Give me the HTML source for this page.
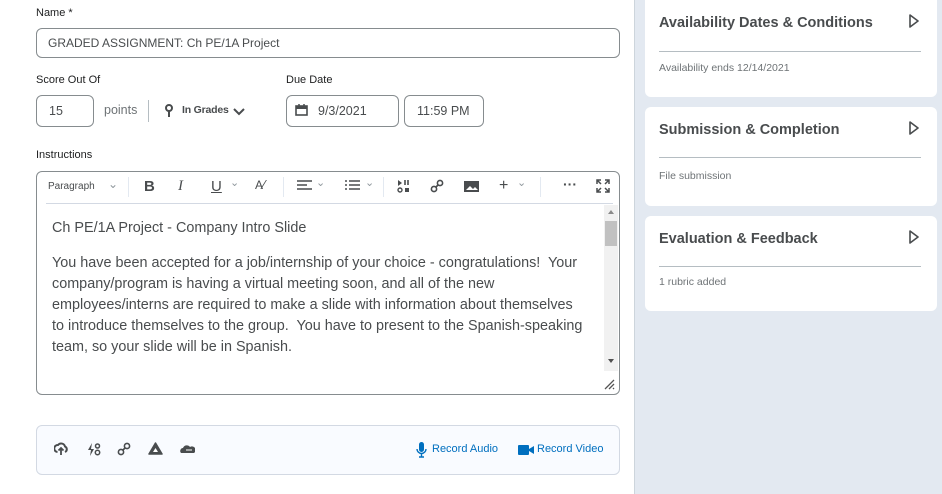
<!DOCTYPE html>
<html><head><style>
*{box-sizing:border-box;margin:0;padding:0}
body{width:942px;height:494px;overflow:hidden;background:#fff;font-family:"Liberation Sans",sans-serif;color:#202122;position:relative}
.lbl{position:absolute;font-size:11px;color:#202122}
.inp{position:absolute;border:1px solid #868c8f;border-radius:6px;font-size:12.5px;color:#494c4e;background:#fff}
.side{position:absolute;left:634px;top:0;width:308px;height:494px;background:#e3e9f1;border-left:1px solid #cdd5dc}
.card{position:absolute;left:10px;width:292px;background:#fff;border-radius:6px}
.card h3{position:absolute;left:14px;top:15px;font-size:14.5px;font-weight:bold;color:#494c4e}
.card .tri{position:absolute;right:18px;top:14px}
.card .ln{position:absolute;left:14px;right:16px;top:51px;border-top:1px solid #b5bdc2}
.card .sub{position:absolute;left:14px;top:63px;font-size:10.5px;color:#6e7376}
.tb{position:absolute;font-size:14px;color:#494c4e}
.p{position:absolute;left:52px;font-size:14.4px;color:#494c4e;line-height:21px}
.blue{color:#006fbf;font-size:11px;position:absolute}
</style></head><body>
<div class="lbl" style="left:36px;top:7px">Name *</div>
<div class="inp" style="left:36px;top:28px;width:584px;height:30px;padding:7px 11px;font-size:12px">GRADED ASSIGNMENT: Ch PE/1A Project</div>
<div class="lbl" style="left:36px;top:74px">Score Out Of</div>
<div class="lbl" style="left:286px;top:74px">Due Date</div>
<div class="inp" style="left:36px;top:95px;width:58px;height:32px;padding:8px 12px">15</div>
<div style="position:absolute;left:104px;top:103px;font-size:12.5px;color:#6e7376">points</div>
<div style="position:absolute;left:148px;top:100px;height:22px;border-left:1px solid #b5bdc2"></div>
<svg style="position:absolute;left:164px;top:104px" width="10" height="14"><circle cx="5" cy="4" r="3" fill="none" stroke="#494c4e" stroke-width="2"/><line x1="5" y1="7" x2="5" y2="13" stroke="#494c4e" stroke-width="2"/></svg>
<div style="position:absolute;left:182px;top:104px;font-size:10.5px;font-weight:bold;color:#494c4e;letter-spacing:-0.2px">In Grades</div>
<svg style="position:absolute;left:233px;top:107px" width="12" height="9"><path d="M1 2l5 5 5-5" fill="none" stroke="#494c4e" stroke-width="2"/></svg>
<div class="inp" style="left:286px;top:95px;width:113px;height:32px;padding:8px 0 0 31px">9/3/2021</div>
<svg style="position:absolute;left:295px;top:104px" width="13" height="12"><rect x="1" y="2" width="11" height="9" fill="none" stroke="#494c4e" stroke-width="1.6"/><rect x="1" y="2" width="11" height="3" fill="#494c4e"/><line x1="4" y1="0" x2="4" y2="3" stroke="#494c4e" stroke-width="1.5"/><line x1="9" y1="0" x2="9" y2="3" stroke="#494c4e" stroke-width="1.5"/></svg>
<div class="inp" style="left:404px;top:95px;width:80px;height:32px;padding:8px 0 0 12px">11:59 PM</div>
<div class="lbl" style="left:36px;top:149px">Instructions</div>
<div style="position:absolute;left:36px;top:171px;width:584px;height:224px;border:1px solid #868c8f;border-radius:6px"></div>
<div style="position:absolute;left:46px;top:203px;width:567px;border-top:1px solid #d3d9e3"></div>
<div class="tb" style="left:48px;top:181px;font-size:10px">Paragraph</div>
<div class="tb" style="left:108px;top:177px;font-size:12px;color:#90989d">⌄</div>
<div style="position:absolute;left:128px;top:177px;height:20px;border-left:1px solid #e3e9f1"></div>
<div class="tb" style="left:144px;top:178px;font-weight:bold;font-size:15px">B</div>
<div class="tb" style="left:178px;top:178px;font-style:italic;font-family:'Liberation Serif';font-size:15px">I</div>
<div class="tb" style="left:211px;top:178px;text-decoration:underline;font-size:15px">U</div>
<div class="tb" style="left:230px;top:176px;font-size:11px;color:#90989d">⌄</div>
<div class="tb" style="left:255px;top:177px;font-size:12px">A<span style="font-size:13px">⁄</span></div>
<div style="position:absolute;left:283px;top:177px;height:20px;border-left:1px solid #e3e9f1"></div>
<svg style="position:absolute;left:297px;top:180px" width="16" height="12"><path d="M0 1h15M0 5h10M0 9h15" stroke="#494c4e" stroke-width="1.6"/></svg>
<div class="tb" style="left:316px;top:176px;font-size:11px;color:#90989d">⌄</div>
<svg style="position:absolute;left:345px;top:180px" width="16" height="12"><path d="M0 1h2M4 1h11M0 5h2M4 5h11M0 9h2M4 9h11" stroke="#494c4e" stroke-width="1.6"/></svg>
<div class="tb" style="left:365px;top:176px;font-size:11px;color:#90989d">⌄</div>
<div style="position:absolute;left:383px;top:177px;height:20px;border-left:1px solid #e3e9f1"></div>
<svg style="position:absolute;left:397px;top:179px" width="14" height="14"><path d="M1 1l4 3-4 3z" fill="#494c4e"/><path d="M8 1v5M11 1v5" stroke="#494c4e" stroke-width="1.6"/><circle cx="3" cy="11" r="2" fill="none" stroke="#494c4e" stroke-width="1.4"/><rect x="8" y="9" width="4" height="4" fill="#494c4e"/></svg>
<svg style="position:absolute;left:430px;top:179px" width="14" height="14"><circle cx="4" cy="10" r="2.6" fill="none" stroke="#494c4e" stroke-width="1.6"/><circle cx="10" cy="4" r="2.6" fill="none" stroke="#494c4e" stroke-width="1.6"/><line x1="6" y1="8" x2="8" y2="6" stroke="#494c4e" stroke-width="1.6"/></svg>
<svg style="position:absolute;left:464px;top:181px" width="15" height="11"><rect x="0" y="0" width="15" height="11" fill="#494c4e"/><path d="M2 9l4-4 3 3 2-2 3 3z" fill="#fff"/></svg>
<div class="tb" style="left:499px;top:177px;font-size:16px">+</div>
<div class="tb" style="left:517px;top:176px;font-size:11px;color:#90989d">⌄</div>
<div style="position:absolute;left:540px;top:177px;height:20px;border-left:1px solid #e3e9f1"></div>
<div class="tb" style="left:563px;top:176px;font-weight:bold">···</div>
<svg style="position:absolute;left:596px;top:179px" width="14" height="14"><path d="M1 5V1h4M9 1h4v4M13 9v4H9M5 13H1V9M1 1l4 4M13 1l-4 4M13 13l-4-4M1 13l4-4" fill="none" stroke="#494c4e" stroke-width="1.5"/></svg>
<div class="p" style="top:218px">Ch PE/1A Project - Company Intro Slide</div>
<div class="p" style="top:253px">You have been accepted for a job/internship of your choice - congratulations!&nbsp; Your<br>company/program is having a virtual meeting soon, and all of the new<br>employees/interns are required to make a slide with information about themselves<br>to introduce themselves to the group.&nbsp; You have to present to the Spanish-speaking<br>team, so your slide will be in Spanish.</div>
<div style="position:absolute;left:604px;top:205px;width:14px;height:166px;background:#f1f1f1"></div>
<div style="position:absolute;left:605px;top:221px;width:12px;height:25px;background:#c1c1c1"></div>
<div style="position:absolute;left:608px;top:210px;width:0;height:0;border:3px solid transparent;border-bottom:4px solid #8a8a8a;border-top:0"></div>
<div style="position:absolute;left:608px;top:359px;width:0;height:0;border:3px solid transparent;border-top:4px solid #505050;border-bottom:0"></div>
<svg style="position:absolute;left:603px;top:378px" width="12" height="12"><path d="M2 11L11 2M6 11l5-5M10 11l1-1" stroke="#555" stroke-width="1.3"/></svg>
<div style="position:absolute;left:36px;top:425px;width:584px;height:50px;border:1px solid #d3d9e3;border-radius:6px;background:#f9fbff"></div>
<svg style="position:absolute;left:54px;top:442px" width="14" height="14"><path d="M3.5 10A3.5 3.5 0 0 1 4 3a4 4 0 0 1 7 1.5 3 3 0 0 1 0 5.5" fill="none" stroke="#494c4e" stroke-width="2"/><path d="M7 13V6M4.5 8.5L7 6l2.5 2.5" fill="none" stroke="#494c4e" stroke-width="1.8"/></svg>
<svg style="position:absolute;left:86px;top:442px" width="15" height="15"><path d="M6 1L2 8h3l-1 6 4-7H5z" fill="#494c4e"/><circle cx="11.5" cy="4" r="2" fill="none" stroke="#494c4e" stroke-width="1.5"/><circle cx="11.5" cy="10.5" r="2.2" fill="none" stroke="#494c4e" stroke-width="1.5"/></svg>
<svg style="position:absolute;left:117px;top:442px" width="14" height="14"><circle cx="4" cy="10" r="2.6" fill="none" stroke="#494c4e" stroke-width="1.6"/><circle cx="10" cy="4" r="2.6" fill="none" stroke="#494c4e" stroke-width="1.6"/><line x1="6" y1="8" x2="8" y2="6" stroke="#494c4e" stroke-width="1.6"/></svg>
<svg style="position:absolute;left:148px;top:442px" width="15" height="14"><path d="M7.5 1L14 12H1z" fill="#494c4e" stroke="#494c4e" stroke-linejoin="round" stroke-width="1.5"/><path d="M7.5 6l2.5 4H5z" fill="#fff"/></svg>
<svg style="position:absolute;left:180px;top:444px" width="15" height="10"><path d="M1 9a3 3 0 0 1 2-5 4 4 0 0 1 7-1 3 3 0 0 1 4 6z" fill="#494c4e"/><path d="M6 6h6" stroke="#fff" stroke-width="1"/></svg>
<svg style="position:absolute;left:416px;top:442px" width="11" height="16"><rect x="3" y="0" width="5" height="10" rx="2.5" fill="#006fbf"/><path d="M1 7a4.5 4.5 0 0 0 9 0M5.5 11.5v3M3 15h5" fill="none" stroke="#006fbf" stroke-width="1.4"/></svg>
<div class="blue" style="left:432px;top:443px">Record Audio</div>
<svg style="position:absolute;left:518px;top:445px" width="16" height="10"><rect x="0" y="0" width="11" height="10" rx="1" fill="#006fbf"/><path d="M11 4l5-3v8l-5-3z" fill="#006fbf"/></svg>
<div class="blue" style="left:537px;top:443px">Record Video</div>
<div class="side">
 <div class="card" style="top:-6px;height:103px"><h3 style="top:21px">Availability Dates &amp; Conditions</h3>
  <svg class="tri" style="top:20px" width="10" height="14"><path d="M1 1l8 6-8 6z" fill="none" stroke="#494c4e" stroke-width="1.6" stroke-linejoin="round"/></svg>
  <div class="ln" style="top:57px"></div><div class="sub" style="top:68px">Availability ends 12/14/2021</div></div>
 <div class="card" style="top:107px;height:99px"><h3>Submission &amp; Completion</h3>
  <svg class="tri" width="10" height="14"><path d="M1 1l8 6-8 6z" fill="none" stroke="#494c4e" stroke-width="1.6" stroke-linejoin="round"/></svg>
  <div class="ln" style="top:50px"></div><div class="sub" style="top:63px">File submission</div></div>
 <div class="card" style="top:216px;height:95px"><h3>Evaluation &amp; Feedback</h3>
  <svg class="tri" width="10" height="14"><path d="M1 1l8 6-8 6z" fill="none" stroke="#494c4e" stroke-width="1.6" stroke-linejoin="round"/></svg>
  <div class="ln" style="top:50px"></div><div class="sub" style="top:60px">1 rubric added</div></div>
</div>
</body></html>
